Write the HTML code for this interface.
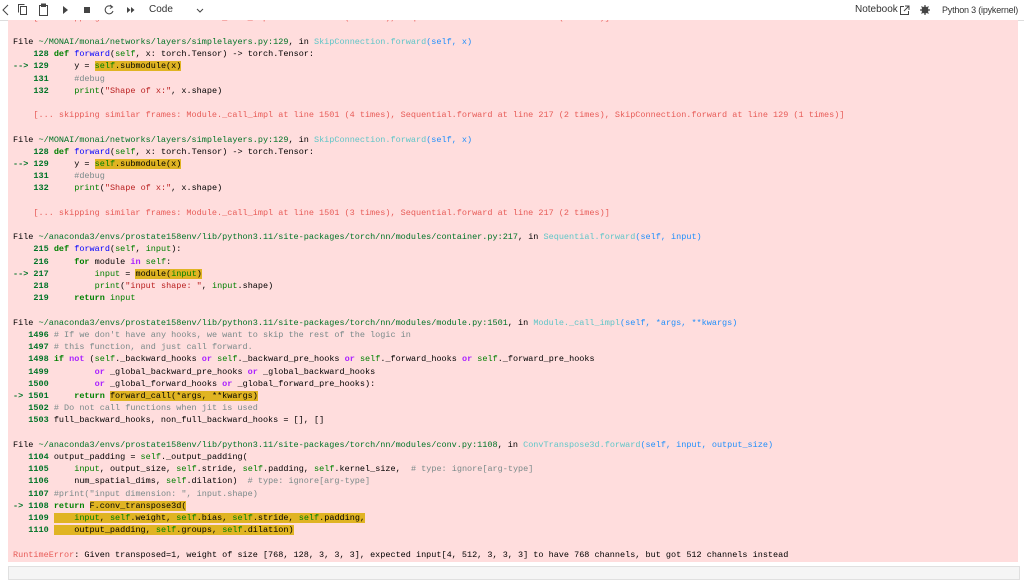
<!DOCTYPE html>
<html><head><meta charset="utf-8"><style>
html,body{margin:0;padding:0;width:1024px;height:576px;overflow:hidden;background:#fff;font-family:"Liberation Sans",sans-serif;}
#tb{position:absolute;left:0;top:0;width:1024px;height:20px;background:#fff;border-bottom:1px solid #ddd;font-size:10px;color:#333;}
#tb .t{position:absolute;top:4px;white-space:nowrap;}
#out{position:absolute;left:8px;top:20px;width:1010px;height:542px;background:#ffdddd;overflow:hidden;}
pre{position:absolute;left:5px;top:-8.4px;margin:0;font-family:"Liberation Mono",monospace;font-size:8.5px;line-height:12.2px;color:#000;white-space:pre;}
.g{color:#007427;font-weight:bold}
.fp{color:#007427}
.c{color:#60c6c8}
.b{color:#208ffb}
.k{color:#008000;font-weight:bold}
.p{color:#aa22ff;font-weight:bold}
.bi{color:#008000}
.fn{color:#0000ff}
.s{color:#ba2121}
.cm{color:#7a8a8a}
.r{color:#e75c58}
.h{background:#e0b423}
#inp{position:absolute;left:8px;top:566px;width:1010px;height:12px;background:#f5f5f5;border:1px solid #e0e0e0;}
</style></head><body>
<div id="tb">
<svg width="220" height="20" style="position:absolute;left:0;top:0" fill="none" stroke="#444" stroke-width="1">
<path d="M8 5 L3 10 L8 15"/>
<rect x="20.5" y="6.5" width="6" height="8"/><path d="M18.5 12.5 V4.5 H24.5"/>
<rect x="39.5" y="5.5" width="8" height="10"/><rect x="41.5" y="4" width="4" height="2.5" fill="#444"/>
<path d="M63 6 L68 10 L63 14 Z" fill="#444" stroke="none"/>
<rect x="84" y="7" width="6" height="6" fill="#444" stroke="none"/>
<path d="M112 7 A4 4 0 1 0 113 11"/><path d="M110 5 L112.5 7 L110 8.5" />
<path d="M127 7 L130.5 10 L127 13 Z M131 7 L134.5 10 L131 13 Z" fill="#444" stroke="none"/>
<path d="M197 9 L200 12 L203 9"/>
</svg>
<span class="t" style="left:149px">Code</span>
<span class="t" style="left:855px">Notebook</span>
<svg width="12" height="12" style="position:absolute;left:899px;top:4px" fill="none" stroke="#444" stroke-width="1"><path d="M5 2.5 H1.5 V10.5 H9.5 V7"/><path d="M6 2 H10 V6 M10 2 L5 7"/></svg>
<svg width="10" height="10" style="position:absolute;left:920px;top:5px"><circle cx="5" cy="5" r="3.5" fill="#444"/><path d="M5 0 V10 M0 5 H10 M1.5 1.5 L8.5 8.5 M8.5 1.5 L1.5 8.5" stroke="#444" stroke-width="1.2"/></svg>
<span class="t" style="left:942px;font-size:9px;letter-spacing:-0.2px;top:4.5px">Python 3 (ipykernel)</span>
</div>
<div id="out"><pre><span class="r">    [... skipping similar frames: Module._call_impl at line 1501 (4 times), Sequential.forward at line 217 (2 times)]</span>

File <span class="fp">~/MONAI/monai/networks/layers/simplelayers.py:129</span>, in <span class="c">SkipConnection.forward</span><span class="b">(self, x)</span>
<span class="g">    128</span> <span class="k">def</span> <span class="fn">forward</span>(<span class="bi">self</span>, x: torch.Tensor) -&gt; torch.Tensor:
<span class="g">--&gt; 129</span>     y = <span class="h"><span class="bi">self</span>.submodule(x)</span>
<span class="g">    131</span>     <span class="cm">#debug</span>
<span class="g">    132</span>     <span class="bi">print</span>(<span class="s">"Shape of x:"</span>, x.shape)

<span class="r">    [... skipping similar frames: Module._call_impl at line 1501 (4 times), Sequential.forward at line 217 (2 times), SkipConnection.forward at line 129 (1 times)]</span>

File <span class="fp">~/MONAI/monai/networks/layers/simplelayers.py:129</span>, in <span class="c">SkipConnection.forward</span><span class="b">(self, x)</span>
<span class="g">    128</span> <span class="k">def</span> <span class="fn">forward</span>(<span class="bi">self</span>, x: torch.Tensor) -&gt; torch.Tensor:
<span class="g">--&gt; 129</span>     y = <span class="h"><span class="bi">self</span>.submodule(x)</span>
<span class="g">    131</span>     <span class="cm">#debug</span>
<span class="g">    132</span>     <span class="bi">print</span>(<span class="s">"Shape of x:"</span>, x.shape)

<span class="r">    [... skipping similar frames: Module._call_impl at line 1501 (3 times), Sequential.forward at line 217 (2 times)]</span>

File <span class="fp">~/anaconda3/envs/prostate158env/lib/python3.11/site-packages/torch/nn/modules/container.py:217</span>, in <span class="c">Sequential.forward</span><span class="b">(self, input)</span>
<span class="g">    215</span> <span class="k">def</span> <span class="fn">forward</span>(<span class="bi">self</span>, <span class="bi">input</span>):
<span class="g">    216</span>     <span class="k">for</span> module <span class="p">in</span> <span class="bi">self</span>:
<span class="g">--&gt; 217</span>         <span class="bi">input</span> = <span class="h">module(<span class="bi">input</span>)</span>
<span class="g">    218</span>         <span class="bi">print</span>(<span class="s">"input shape: "</span>, <span class="bi">input</span>.shape)
<span class="g">    219</span>     <span class="k">return</span> <span class="bi">input</span>

File <span class="fp">~/anaconda3/envs/prostate158env/lib/python3.11/site-packages/torch/nn/modules/module.py:1501</span>, in <span class="c">Module._call_impl</span><span class="b">(self, *args, **kwargs)</span>
<span class="g">   1496</span> <span class="cm"># If we don't have any hooks, we want to skip the rest of the logic in</span>
<span class="g">   1497</span> <span class="cm"># this function, and just call forward.</span>
<span class="g">   1498</span> <span class="k">if</span> <span class="p">not</span> (<span class="bi">self</span>._backward_hooks <span class="p">or</span> <span class="bi">self</span>._backward_pre_hooks <span class="p">or</span> <span class="bi">self</span>._forward_hooks <span class="p">or</span> <span class="bi">self</span>._forward_pre_hooks
<span class="g">   1499</span>         <span class="p">or</span> _global_backward_pre_hooks <span class="p">or</span> _global_backward_hooks
<span class="g">   1500</span>         <span class="p">or</span> _global_forward_hooks <span class="p">or</span> _global_forward_pre_hooks):
<span class="g">-&gt; 1501</span>     <span class="k">return</span> <span class="h">forward_call(*args, **kwargs)</span>
<span class="g">   1502</span> <span class="cm"># Do not call functions when jit is used</span>
<span class="g">   1503</span> full_backward_hooks, non_full_backward_hooks = [], []

File <span class="fp">~/anaconda3/envs/prostate158env/lib/python3.11/site-packages/torch/nn/modules/conv.py:1108</span>, in <span class="c">ConvTranspose3d.forward</span><span class="b">(self, input, output_size)</span>
<span class="g">   1104</span> output_padding = <span class="bi">self</span>._output_padding(
<span class="g">   1105</span>     <span class="bi">input</span>, output_size, <span class="bi">self</span>.stride, <span class="bi">self</span>.padding, <span class="bi">self</span>.kernel_size,  <span class="cm"># type: ignore[arg-type]</span>
<span class="g">   1106</span>     num_spatial_dims, <span class="bi">self</span>.dilation)  <span class="cm"># type: ignore[arg-type]</span>
<span class="g">   1107</span> <span class="cm">#print("input dimension: ", input.shape)</span>
<span class="g">-&gt; 1108</span> <span class="k">return</span> <span class="h">F.conv_transpose3d(</span>
<span class="g">   1109</span> <span class="h">    <span class="bi">input</span>, <span class="bi">self</span>.weight, <span class="bi">self</span>.bias, <span class="bi">self</span>.stride, <span class="bi">self</span>.padding,</span>
<span class="g">   1110</span> <span class="h">    output_padding, <span class="bi">self</span>.groups, <span class="bi">self</span>.dilation)</span>

<span class="r">RuntimeError</span>: Given transposed=1, weight of size [768, 128, 3, 3, 3], expected input[4, 512, 3, 3, 3] to have 768 channels, but got 512 channels instead
</pre></div>
<div id="inp"></div>
</body></html>
